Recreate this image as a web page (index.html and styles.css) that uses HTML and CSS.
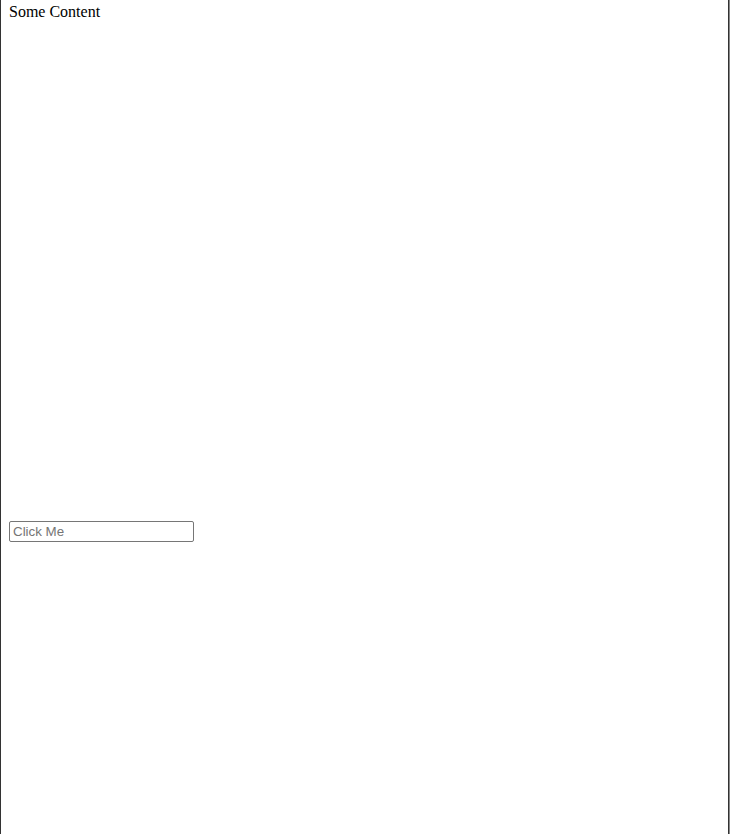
FILE: index.html
```html
<!DOCTYPE html>
<html>
<head>
<meta charset="utf-8">
<link rel="stylesheet" href="styles.css">
</head>
<body>
<div class="frame">
  <div class="content">Some Content</div>
  <div class="spacer"></div>
  <input class="field" type="text" placeholder="Click Me">
</div>
</body>
</html>
```
FILE: styles.css
```css
html, body {
  margin: 0;
  padding: 0;
  background: #fff;
}
.frame {
  box-sizing: border-box;
  width: 729px;
  height: 834px;
  border-left: 1px solid #333;
  border-right: 1px solid #333;
  box-shadow: 1px 0 0 #888;
  padding: 3px 8px 0;
  font-family: "Liberation Serif", "Times New Roman", serif;
  font-size: 16px;
  color: #000;
  overflow: hidden;
}
.content {
  line-height: 18px;
}
.spacer {
  height: 500px;
}
.field {
  display: block;
  box-sizing: border-box;
  width: 185px;
  height: 21px;
  margin: 0;
  padding: 1px 3px;
  border: 1px solid #767676;
  border-radius: 2px;
  font-family: "Liberation Sans", Arial, sans-serif;
  font-size: 13.33px;
  color: #000;
  background: #fff;
}
.field::placeholder {
  color: #757575;
}
```
